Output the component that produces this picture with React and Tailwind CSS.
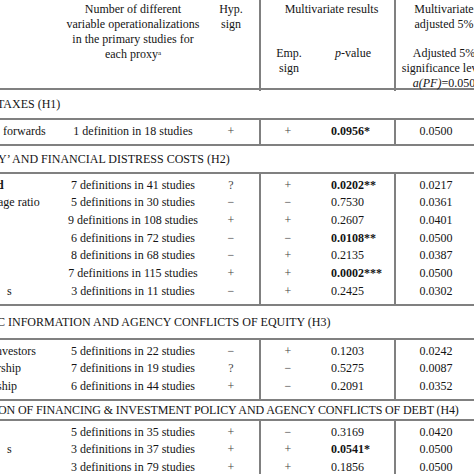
import React from "react";

const LINE = "border-[#808080]";

// table data, grouped by hypothesis
const groups = [
  {
    title: "TAXES (H1)",
    titleShift: "-ml-[3px]",
    titleH: "h-[30px]",
    rows: [
      { name: "forwards", nameCls: "pl-[3px]", def: "1 definition in 18 studies", hyp: "+", emp: "+", p: "0.0956*", bold: true, adj: "0.0500" },
    ],
  },
  {
    title: "Y’ AND FINANCIAL DISTRESS COSTS (H2)",
    titleShift: "-ml-[2px]",
    titleH: "h-[28px] pt-[1px]",
    rows: [
      { name: "d", nameCls: "-ml-[3px] font-bold", def: "7 definitions in 41 studies", hyp: "?", emp: "+", p: "0.0202**", bold: true, adj: "0.0217" },
      { name: "age ratio", nameCls: "-ml-[2px]", def: "5 definitions in 30 studies", hyp: "−", emp: "−", p: "0.7530", adj: "0.0361" },
      { name: "", def: "9 definitions in 108 studies", hyp: "+", emp: "+", p: "0.2607", adj: "0.0401" },
      { name: "", def: "6 definitions in 72 studies", hyp: "−", emp: "−", p: "0.0108**", bold: true, adj: "0.0500" },
      { name: "", def: "8 definitions in 68 studies", hyp: "−", emp: "+", p: "0.2135", adj: "0.0387" },
      { name: "", def: "7 definitions in 115 studies", hyp: "+", emp: "+", p: "0.0002***", bold: true, adj: "0.0500" },
      { name: "s", nameCls: "pl-[7px]", def: "3 definitions in 11 studies", hyp: "−", emp: "+", p: "0.2425", adj: "0.0302" },
    ],
  },
  {
    title: "C INFORMATION AND AGENCY CONFLICTS OF EQUITY (H3)",
    titleShift: "-ml-[3px]",
    titleH: "h-[34px]",
    rows: [
      { name: "nvestors", nameCls: "-ml-[4px]", def: "5 definitions in 22 studies", hyp: "−", emp: "+", p: "0.1203", adj: "0.0242" },
      { name: "rship", nameCls: "-ml-[3px]", def: "7 definitions in 19 studies", hyp: "?", emp: "−", p: "0.5275", adj: "0.0087" },
      { name: "ship", nameCls: "-ml-[3px]", def: "6 definitions in 44 studies", hyp: "+", emp: "−", p: "0.2091", adj: "0.0352" },
    ],
  },
  {
    title: "ON OF FINANCING & INVESTMENT POLICY AND AGENCY CONFLICTS OF DEBT (H4)",
    titleShift: "-ml-[2px] tracking-[-0.12px]",
    titleH: "h-[20px]",
    rows: [
      { name: "", def: "5 definitions in 35 studies", hyp: "+", emp: "−", p: "0.3169", adj: "0.0420" },
      { name: "s", nameCls: "pl-[7px]", def: "3 definitions in 37 studies", hyp: "+", emp: "+", p: "0.0541*", bold: true, adj: "0.0500" },
      { name: "", def: "3 definitions in 79 studies", hyp: "+", emp: "+", p: "0.1856", adj: "0.0500" },
    ],
  },
];

function Cell({ children, className = "" }) {
  return <div className={`h-[17.7px] leading-[17.7px] whitespace-nowrap ${className}`}>{children}</div>;
}

function Group({ g }) {
  return (
    <>
      <div className={`${g.titleH} flex items-center whitespace-nowrap border-b-2 ${LINE}`}>
        <span className={g.titleShift}>{g.title}</span>
      </div>
      <div className={`grid grid-cols-[63px_140px_56px_53px_82px_104px] border-b-2 ${LINE}`}>
        <div className="py-[3px] overflow-hidden">
          {g.rows.map((r, i) => (
            <Cell key={i} className={r.nameCls || ""}>{r.name}</Cell>
          ))}
        </div>
        <div className="py-[3px] text-center">
          {g.rows.map((r, i) => <Cell key={i}>{r.def}</Cell>)}
        </div>
        <div className="py-[3px] text-center text-[#444]">
          {g.rows.map((r, i) => <Cell key={i}>{r.hyp}</Cell>)}
        </div>
        <div className={`py-[3px] text-center pl-[3px] text-[#444] border-l-2 ${LINE}`}>
          {g.rows.map((r, i) => <Cell key={i}>{r.emp}</Cell>)}
        </div>
        <div className="py-[3px] pl-[19px]">
          {g.rows.map((r, i) => (
            <Cell key={i} className={r.bold ? "font-bold" : ""}>{r.p}</Cell>
          ))}
        </div>
        <div className={`py-[3px] text-center pr-[22px] border-l-2 ${LINE}`}>
          {g.rows.map((r, i) => <Cell key={i}>{r.adj}</Cell>)}
        </div>
      </div>
    </>
  );
}

export default function App() {
  return (
    <div className="w-[474px] h-[474px] overflow-hidden bg-white text-[#141414] text-[12px] font-['Liberation_Serif',serif]">
      <div className="w-[498px]">
        {/* header */}
        <div className={`grid grid-cols-[63px_140px_56px_135px_104px] h-[90px] pt-[2px] leading-[15px] border-b-2 ${LINE}`}>
          <div />
          <div className="text-center">
            <div>Number of different</div>
            <div>variable operationalizations</div>
            <div>in the primary studies for</div>
            <div>
              each proxy<sup className="text-[7px]">a</sup>
            </div>
          </div>
          <div className="text-center">
            <div>Hyp.</div>
            <div>sign</div>
          </div>
          <div className={`border-l-2 ${LINE} -mt-[2px] pt-[2px]`}>
            <div className="text-center pl-[8px]">Multivariate results</div>
            <div className="grid grid-cols-[53px_82px] mt-[29px]">
              <div className="text-center pl-[3px]">
                <div>Emp.</div>
                <div>sign</div>
              </div>
              <div className="text-center pr-[4px]">
                <i>p</i>-value
              </div>
            </div>
          </div>
          <div className={`border-l-2 ${LINE} -mt-[2px] pt-[2px] pr-[6px] text-center whitespace-nowrap`}>
            <div>Multivariate</div>
            <div>adjusted 5%</div>
            <div className="mt-[14px]">Adjusted 5%</div>
            <div>significance level</div>
            <div>
              <i>a(PF)</i>=0.050
            </div>
          </div>
        </div>

        {groups.map((g, i) => (
          <Group key={i} g={g} />
        ))}
      </div>
    </div>
  );
}
